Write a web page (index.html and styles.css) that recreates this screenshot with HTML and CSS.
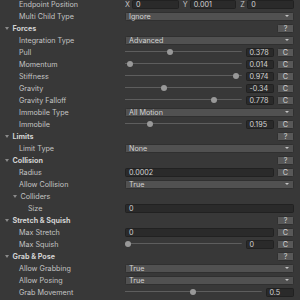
FILE: index.html
```html
<!DOCTYPE html>
<html lang="en">
<head>
    <meta charset="UTF-8">
    <title>Inspector</title>
    <link rel="stylesheet" href="styles.css">
</head>
<body>

<div class="inspector">
    <div class="row">
        <div class="label">Endpoint Position</div>
        <div class="value vec">
            <div class="vec-part"><span class="axis">X</span><div class="field">0</div></div>
            <div class="vec-part"><span class="axis">Y</span><div class="field">0.001</div></div>
            <div class="vec-part"><span class="axis">Z</span><div class="field">0</div></div>
        </div>
    </div>
    <div class="row">
        <div class="label">Multi Child Type</div>
        <div class="value"><div class="popup">Ignore</div></div>
    </div>

    <!-- Forces -->
    <div class="row header">
        <div class="label"><span class="arrow"></span>Forces</div>
        <div class="value"><div class="btn">?</div></div>
    </div>
    <div class="row">
        <div class="label">Integration Type</div>
        <div class="value"><div class="popup">Advanced</div></div>
    </div>
    <div class="row">
        <div class="label">Pull</div>
        <div class="value">
            <div class="slider"><div class="track"><span class="knob" style="left: 37.8%"></span></div></div>
            <div class="field num">0.378</div>
            <div class="btn">C</div>
        </div>
    </div>
    <div class="row">
        <div class="label">Momentum</div>
        <div class="value">
            <div class="slider"><div class="track"><span class="knob" style="left: 1.4%"></span></div></div>
            <div class="field num">0.014</div>
            <div class="btn">C</div>
        </div>
    </div>
    <div class="row">
        <div class="label">Stiffness</div>
        <div class="value">
            <div class="slider"><div class="track"><span class="knob" style="left: 97.4%"></span></div></div>
            <div class="field num">0.974</div>
            <div class="btn">C</div>
        </div>
    </div>
    <div class="row">
        <div class="label">Gravity</div>
        <div class="value">
            <div class="slider"><div class="track"><span class="knob" style="left: 33%"></span></div></div>
            <div class="field num">-0.34</div>
            <div class="btn">C</div>
        </div>
    </div>
    <div class="row">
        <div class="label">Gravity Falloff</div>
        <div class="value">
            <div class="slider"><div class="track"><span class="knob" style="left: 77.8%"></span></div></div>
            <div class="field num">0.778</div>
            <div class="btn">C</div>
        </div>
    </div>
    <div class="row">
        <div class="label">Immobile Type</div>
        <div class="value"><div class="popup">All Motion</div></div>
    </div>
    <div class="row">
        <div class="label">Immobile</div>
        <div class="value">
            <div class="slider"><div class="track"><span class="knob" style="left: 19.5%"></span></div></div>
            <div class="field num">0.195</div>
            <div class="btn">C</div>
        </div>
    </div>

    <!-- Limits -->
    <div class="row header">
        <div class="label"><span class="arrow"></span>Limits</div>
        <div class="value"><div class="btn">?</div></div>
    </div>
    <div class="row">
        <div class="label">Limit Type</div>
        <div class="value"><div class="popup">None</div></div>
    </div>

    <!-- Collision -->
    <div class="row header">
        <div class="label"><span class="arrow"></span>Collision</div>
        <div class="value"><div class="btn">?</div></div>
    </div>
    <div class="row">
        <div class="label">Radius</div>
        <div class="value">
            <div class="field">0.0002</div>
            <div class="btn">C</div>
        </div>
    </div>
    <div class="row">
        <div class="label">Allow Collision</div>
        <div class="value"><div class="popup">True</div></div>
    </div>
    <div class="row">
        <div class="label sub-fold"><span class="arrow"></span>Colliders</div>
    </div>
    <div class="row">
        <div class="label indent2">Size</div>
        <div class="value"><div class="field">0</div></div>
    </div>

    <!-- Stretch & Squish -->
    <div class="row header">
        <div class="label"><span class="arrow"></span>Stretch &amp; Squish</div>
        <div class="value"><div class="btn">?</div></div>
    </div>
    <div class="row">
        <div class="label">Max Stretch</div>
        <div class="value">
            <div class="field">0</div>
            <div class="btn">C</div>
        </div>
    </div>
    <div class="row">
        <div class="label">Max Squish</div>
        <div class="value">
            <div class="slider"><div class="track"><span class="knob" style="left: 0%"></span></div></div>
            <div class="field num">0</div>
            <div class="btn">C</div>
        </div>
    </div>

    <!-- Grab & Pose -->
    <div class="row header">
        <div class="label"><span class="arrow"></span>Grab &amp; Pose</div>
        <div class="value"><div class="btn">?</div></div>
    </div>
    <div class="row">
        <div class="label">Allow Grabbing</div>
        <div class="value"><div class="popup">True</div></div>
    </div>
    <div class="row">
        <div class="label">Allow Posing</div>
        <div class="value"><div class="popup">True</div></div>
    </div>
    <div class="row">
        <div class="label">Grab Movement</div>
        <div class="value wide-slider">
            <div class="slider"><div class="track"><span class="knob" style="left: 50%"></span></div></div>
            <div class="field num">0.5</div>
        </div>
    </div>
    <div class="row">
        <div class="label"></div>
        <div class="value"><div class="checkbox"></div></div>
    </div>
</div>

</body>
</html>
```

FILE: styles.css
```css
body {
    margin: 0;
    background: #383838;
    font-family: Inter, "Noto Sans", sans-serif;
    font-size: 7.2px;
    color: #c4c4c4;
    overflow: hidden;
}
.inspector {
    margin-top: -2px;
    padding-right: 6px;
}
.row {
    display: flex;
    align-items: center;
    height: 12px;
}
.label {
    flex: none;
    width: 125px;
    padding-left: 19px;
    box-sizing: border-box;
    white-space: nowrap;
    display: flex;
    align-items: center;
}
.header .label {
    padding-left: 5px;
    font-weight: bold;
    color: #d2d2d2;
}
.sub-fold {
    padding-left: 13px;
}
.indent2 {
    padding-left: 28px;
}
.arrow {
    width: 0;
    height: 0;
    border-left: 2.2px solid transparent;
    border-right: 2.2px solid transparent;
    border-top: 3.5px solid #8a8a8a;
    margin-right: 3.5px;
}
.value {
    flex: 1;
    display: flex;
    align-items: center;
    justify-content: flex-end;
    gap: 3px;
    min-width: 0;
}
.vec {
    gap: 4px;
}
.vec-part {
    flex: 1;
    display: flex;
    align-items: center;
}
.axis {
    width: 7px;
    flex: none;
}
.field {
    flex: 1;
    height: 9px;
    box-sizing: border-box;
    background: #2a2a2a;
    border: 1px solid #212121;
    border-radius: 1.5px;
    padding-left: 3px;
    line-height: 7px;
    color: #d2d2d2;
    white-space: nowrap;
    overflow: hidden;
}
.field.num {
    flex: none;
    width: 28.5px;
}
.popup {
    flex: 1;
    height: 9px;
    box-sizing: border-box;
    background: #515151;
    border: 1px solid #303030;
    border-radius: 1.5px;
    padding-left: 3px;
    line-height: 7px;
    color: #d2d2d2;
    position: relative;
}
.popup::after {
    content: "";
    position: absolute;
    right: 4px;
    top: 2.5px;
    border-left: 2px solid transparent;
    border-right: 2px solid transparent;
    border-top: 2.5px solid #c4c4c4;
}
.btn {
    flex: none;
    width: 17px;
    height: 9px;
    box-sizing: border-box;
    background: #585858;
    border: 1px solid #303030;
    border-radius: 1.5px;
    text-align: center;
    line-height: 7px;
    color: #d2d2d2;
}
.slider {
    flex: 1;
    height: 9px;
    margin-right: 1px;
    background: linear-gradient(#5e5e5e, #5e5e5e) center / 100% 1.2px no-repeat;
}
.track {
    position: relative;
    height: 100%;
    margin: 0 3px;
}
.knob {
    position: absolute;
    top: 1.5px;
    width: 6px;
    height: 6px;
    margin-left: -3px;
    border-radius: 50%;
    background: #999999;
}
.wide-slider .slider {
    margin-right: 1px;
}
.checkbox {
    width: 8px;
    height: 8px;
    margin-right: auto;
    background: #2a2a2a;
    border: 1px solid #212121;
    border-radius: 1.5px;
    margin-top: 2px;
}
```
